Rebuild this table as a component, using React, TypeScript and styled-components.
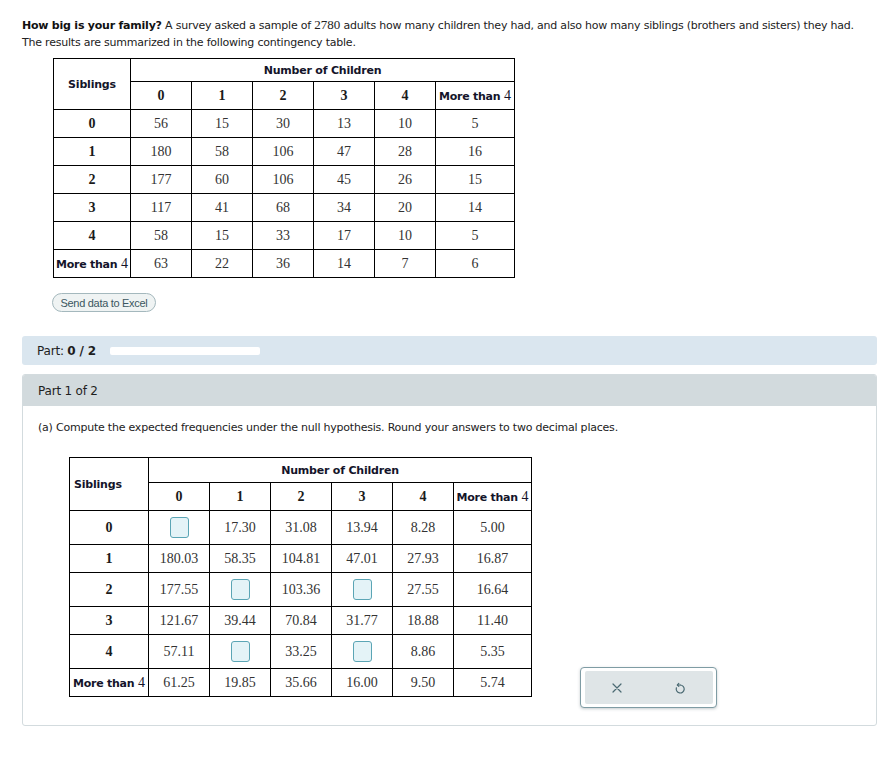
import React from 'react';
import styled, { createGlobalStyle } from 'styled-components';

const GlobalStyle = createGlobalStyle`
  body {
    margin: 0;
    background: #fff;
    font-family: "DejaVu Sans", Verdana, sans-serif;
    color: #1e1e1e;
  }
`;

const Page = styled.div`
  width: 895px;
  padding: 16px 18px 40px 22px;
  box-sizing: border-box;
`;

const Intro = styled.p`
  margin: 0;
  font-size: 11px;
  line-height: 17px;
  letter-spacing: -0.22px;
  color: #222;
  b {
    color: #111;
  }
`;

const Num = styled.span`
  font-family: "Liberation Serif", "Times New Roman", serif;
  font-size: 13px;
  letter-spacing: 0;
`;

const DataTable = styled.table<{ left: number; top: number }>`
  border-collapse: collapse;
  margin-left: ${p => p.left}px;
  margin-top: ${p => p.top}px;
  td, th {
    border: 1px solid #000;
    padding: 0;
    text-align: center;
    vertical-align: middle;
  }
`;

const HeadCell = styled.th<{ w?: number; align?: string }>`
  font-family: "DejaVu Sans", Verdana, sans-serif;
  font-size: 11px;
  font-weight: bold;
  letter-spacing: -0.2px;
  color: #14142a;
  width: ${p => (p.w ? `${p.w}px` : 'auto')};
  && {
    text-align: ${p => p.align || 'center'};
    padding-left: ${p => (p.align === 'left' ? '4px' : '0')};
  }
`;

const ColHead = styled.th<{ w: number }>`
  width: ${p => p.w}px;
  font-family: "Liberation Serif", "Times New Roman", serif;
  font-size: 14px;
  font-weight: bold;
  color: #1a1a1a;
`;

const RowHead = styled.th`
  font-family: "Liberation Serif", "Times New Roman", serif;
  font-size: 14px;
  font-weight: bold;
  color: #1a1a1a;
`;

const MoreThan = styled.span`
  font-family: "DejaVu Sans", Verdana, sans-serif;
  font-size: 11px;
  font-weight: bold;
  letter-spacing: -0.25px;
  color: #14142a;
  white-space: nowrap;
  em {
    font-style: normal;
    font-weight: normal;
    letter-spacing: 0;
    font-family: "Liberation Serif", "Times New Roman", serif;
    font-size: 14px;
  }
`;

const Cell = styled.td`
  font-family: "Liberation Serif", "Times New Roman", serif;
  font-size: 14px;
  color: #333;
`;

const Row = styled.tr<{ h: number }>`
  height: ${p => p.h}px;
`;

const AnswerBox = styled.span`
  display: inline-block;
  width: 17px;
  height: 19px;
  vertical-align: middle;
  background: #e4f3f7;
  border: 1px solid #5ba5b5;
  border-radius: 3px;
`;

const ExcelButton = styled.button`
  display: block;
  margin: 15px 0 0 30px;
  height: 19px;
  width: 104px;
  padding: 0;
  border: 1px solid #a4b8bd;
  border-radius: 10px;
  background: #eff3f3;
  color: #3b5660;
  font-family: "Liberation Sans", Arial, sans-serif;
  font-size: 11px;
  letter-spacing: -0.3px;
`;

const PartBar = styled.div`
  margin-top: 24px;
  height: 29px;
  background: #dae6ef;
  border-radius: 3px;
  display: flex;
  align-items: center;
  padding-left: 15px;
  gap: 14px;
  font-size: 12px;
  letter-spacing: -0.2px;
  color: #1e1e1e;
`;

const Progress = styled.div`
  width: 150px;
  height: 8px;
  background: #fff;
  border-radius: 2px;
`;

const Panel = styled.div`
  margin-top: 9px;
  border: 1px solid #d3dbde;
  border-radius: 3px;
  overflow: hidden;
`;

const PanelHeader = styled.div`
  height: 31px;
  background: #d2dadd;
  display: flex;
  align-items: center;
  padding-left: 15px;
  font-size: 12px;
  letter-spacing: -0.2px;
  color: #1e1e1e;
`;

const PanelBody = styled.div`
  padding: 14px 0 17px 15px;
`;

const Question = styled.p`
  margin: 0;
  font-size: 11px;
  line-height: 16px;
  letter-spacing: -0.22px;
  color: #222;
`;

const WorkRow = styled.div`
  display: flex;
  align-items: flex-start;
`;

const ToolFrame = styled.div`
  margin: 231px 0 0 48px;
  width: 137px;
  height: 41px;
  box-sizing: border-box;
  border: 1px solid #7f9ca4;
  border-radius: 4px;
  background: #fff;
  padding: 3px 3px 3px 4px;
  box-shadow: 0 1px 3px rgba(60, 80, 90, 0.3);
`;

const ToolInner = styled.div`
  height: 100%;
  background: #dfe5e7;
  border-radius: 2px;
  display: flex;
  align-items: center;
  justify-content: space-between;
  padding: 0 27px 0 26px;
`;

const ToolIcon = styled.svg`
  width: 12px;
  height: 12px;
  color: #4b6a73;
`;

const cols = ['0', '1', '2', '3', '4'];

const observed: (number | null)[][] = [
  [56, 15, 30, 13, 10, 5],
  [180, 58, 106, 47, 28, 16],
  [177, 60, 106, 45, 26, 15],
  [117, 41, 68, 34, 20, 14],
  [58, 15, 33, 17, 10, 5],
  [63, 22, 36, 14, 7, 6],
];

const expected: (string | null)[][] = [
  [null, '17.30', '31.08', '13.94', '8.28', '5.00'],
  ['180.03', '58.35', '104.81', '47.01', '27.93', '16.87'],
  ['177.55', null, '103.36', null, '27.55', '16.64'],
  ['121.67', '39.44', '70.84', '31.77', '18.88', '11.40'],
  ['57.11', null, '33.25', null, '8.86', '5.35'],
  ['61.25', '19.85', '35.66', '16.00', '9.50', '5.74'],
];

const rowLabel = (i: number) =>
  i < 5 ? <RowHead>{i}</RowHead> : (
    <RowHead>
      <MoreThan>More than <em>4</em></MoreThan>
    </RowHead>
  );

interface TableProps {
  left: number;
  top: number;
  firstW: number;
  lastW: number;
  siblingsAlign?: string;
  head1: number;
  head2: number;
  rows: React.ReactNode[][];
  rowHeights: number[];
}

const Contingency = (props: TableProps): JSX.Element => (
  <DataTable left={props.left} top={props.top}>
    <tbody>
      <Row h={props.head1}>
        <HeadCell rowSpan={2} w={props.firstW} align={props.siblingsAlign}>Siblings</HeadCell>
        <HeadCell colSpan={6}>Number of Children</HeadCell>
      </Row>
      <Row h={props.head2}>
        {cols.map(c => (
          <ColHead key={c} w={60}>{c}</ColHead>
        ))}
        <ColHead w={props.lastW}>
          <MoreThan>More than <em>4</em></MoreThan>
        </ColHead>
      </Row>
      {props.rows.map((r, i) => (
        <Row key={i} h={props.rowHeights[i]}>
          {rowLabel(i)}
          {r.map((v, j) => (
            <Cell key={j}>{v}</Cell>
          ))}
        </Row>
      ))}
    </tbody>
  </DataTable>
);

const App = (): JSX.Element => {
  const expRows = expected.map(r => r.map(v => (v === null ? <AnswerBox /> : v)));
  const expHeights = expected.map(r => (r.includes(null) ? 34 : 28));
  return (
    <Page>
      <GlobalStyle />
      <Intro>
        <b>How big is your family?</b> A survey asked a sample of <Num>2780</Num> adults how many children they
        had, and also how many siblings (brothers and sisters) they had.
        <br />
        The results are summarized in the following contingency table.
      </Intro>

      <Contingency
        left={31}
        top={7}
        firstW={76}
        lastW={78}
        head1={23}
        head2={28}
        rows={observed}
        rowHeights={[28, 28, 28, 28, 28, 28]}
      />

      <ExcelButton>Send data to Excel</ExcelButton>

      <PartBar>
        <span>Part: <b>0 / 2</b></span>
        <Progress />
      </PartBar>

      <Panel>
        <PanelHeader>Part 1 of 2</PanelHeader>
        <PanelBody>
          <Question>
            (a) Compute the expected frequencies under the null hypothesis. Round your answers to two decimal places.
          </Question>
          <WorkRow>
            <Contingency
              left={31}
              top={21}
              firstW={74}
              lastW={77}
              siblingsAlign="left"
              head1={25}
              head2={28}
              rows={expRows}
              rowHeights={expHeights}
            />
            <ToolFrame>
              <ToolInner>
                <ToolIcon viewBox="0 0 12 12" fill="none" stroke="currentColor" strokeWidth="1.2" strokeLinecap="round">
                  <path d="M2 2 L10 10 M10 2 L2 10" />
                </ToolIcon>
                <ToolIcon viewBox="0 0 12 12" fill="none" stroke="currentColor" strokeWidth="1.2" strokeLinecap="round" strokeLinejoin="round">
                  <path d="M6.2 3 A4 4 0 1 1 2.4 5.8" />
                  <path d="M6.2 3 L3.4 3" />
                  <path d="M4.8 1.4 L3.4 3 L4.8 4.4" />
                </ToolIcon>
              </ToolInner>
            </ToolFrame>
          </WorkRow>
        </PanelBody>
      </Panel>
    </Page>
  );
};

export default App;
